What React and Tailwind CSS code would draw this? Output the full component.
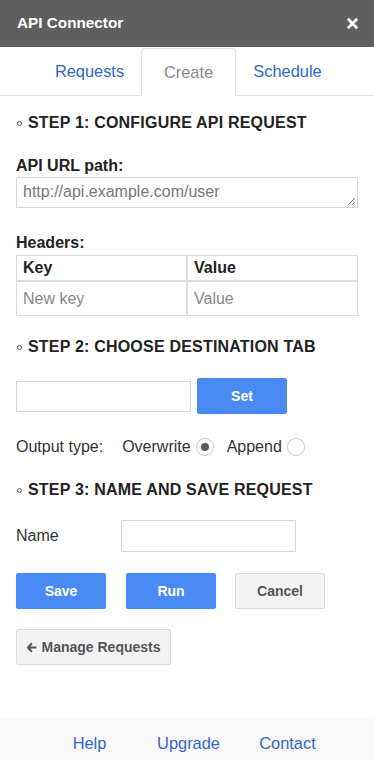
import { useState } from 'react'

function StepTitle({ children }) {
  return (
    <div className="flex items-center h-[20px] leading-[20px] text-[16px] font-bold text-[#222] tracking-[0.2px]">
      <span className="w-[5px] h-[5px] rounded-full border border-[#555] ml-[17px] mr-[6px] mt-[1px]" />
      <span>{children}</span>
    </div>
  )
}

function Radio({ checked }) {
  return (
    <span className="w-[18px] h-[18px] rounded-full border border-[#c8c8c8] flex items-center justify-center bg-white">
      {checked && <span className="w-[8px] h-[8px] rounded-full bg-[#5a5a5a]" />}
    </span>
  )
}

const blueBtn = 'w-[90px] h-[36px] rounded-[2px] bg-[#4a8af4] text-white font-bold text-[14px]'
const greyBtn = 'h-[36px] rounded-[2px] bg-[#f3f3f3] border border-[#dcdcdc] font-bold text-[14px]'

export default function App() {
  const [tab] = useState('Create')
  const tabs = ['Requests', 'Create', 'Schedule']

  return (
    <div className="w-[374px] h-[761px] flex flex-col bg-white text-[#222]" style={{ fontFamily: '"Liberation Sans", Arial, sans-serif' }}>
      <div className="h-[47px] bg-[#5f5f5f] flex items-center justify-between pl-[17px] pr-[15px] shrink-0">
        <span className="text-white font-bold text-[15.3px]">API Connector</span>
        <svg width="13" height="13" viewBox="0 0 13 13">
          <path d="M1.8 1.8 L11.2 11.2 M11.2 1.8 L1.8 11.2" stroke="white" strokeWidth="2.8" />
        </svg>
      </div>

      <div className="flex pl-[38px] border-b border-[#e3e3e3] h-[49px] pt-[1px] shrink-0">
        {tabs.map((t) => (
          <div
            key={t}
            className={
              t === tab
                ? 'w-[95px] -mb-px bg-white border border-[#e3e3e3] border-b-white rounded-t-[4px] flex items-center justify-center text-[16.4px] text-[#8a8a8a]'
                : 'w-[103px] flex items-center justify-center text-[16.4px] text-[#3366c8]'
            }
          >
            {t}
          </div>
        ))}
      </div>

      <div className="flex-1 pt-[17px] text-[16px] leading-[20px]">
        <StepTitle>STEP 1: CONFIGURE API REQUEST</StepTitle>

        <div className="px-[16px]">
          <div className="mt-[23px] font-bold">API URL path:</div>
          <div className="mt-[1px] relative h-[31px] border border-[#d6d6d6] px-[6px] pt-[4px] text-[#777]">
            http://api.example.com/user
            <svg className="absolute right-[1px] bottom-[1px]" width="9" height="9" viewBox="0 0 9 9">
              <path d="M8 1 L1 8 M8 5 L5 8" stroke="#777" strokeWidth="1" />
            </svg>
          </div>

          <div className="mt-[25px] font-bold">Headers:</div>
          <div className="mt-[2px] border border-[#dcdcdc] grid grid-cols-[171px_1fr]">
            <div className="h-[26px] border-r-2 border-b-2 border-[#dcdcdc] px-[6px] flex items-center font-bold">Key</div>
            <div className="h-[26px] border-b-2 border-[#dcdcdc] px-[6px] flex items-center font-bold">Value</div>
            <div className="h-[33px] border-r-2 border-[#dcdcdc] px-[6px] flex items-center text-[#888]">New key</div>
            <div className="h-[33px] px-[6px] flex items-center text-[#888]">Value</div>
          </div>
        </div>

        <div className="mt-[21px]">
          <StepTitle>STEP 2: CHOOSE DESTINATION TAB</StepTitle>
        </div>

        <div className="px-[16px]">
          <div className="mt-[21px] flex items-center gap-[6px]">
            <div className="w-[175px] h-[31px] border border-[#d6d6d6]" />
            <button className={blueBtn}>Set</button>
          </div>

          <div className="mt-[23px] flex items-center text-[#333]">
            <span>Output type:</span>
            <span className="ml-[19px]">Overwrite</span>
            <span className="ml-[5px]"><Radio checked /></span>
            <span className="ml-[13px]">Append</span>
            <span className="ml-[5px]"><Radio /></span>
          </div>
        </div>

        <div className="mt-[23px]">
          <StepTitle>STEP 3: NAME AND SAVE REQUEST</StepTitle>
        </div>

        <div className="px-[16px]">
          <div className="mt-[20px] flex items-center text-[#333]">
            <span className="w-[105px]">Name</span>
            <div className="w-[175px] h-[32px] border border-[#d6d6d6]" />
          </div>

          <div className="mt-[21px] flex items-center">
            <button className={blueBtn}>Save</button>
            <button className={'ml-[20px] ' + blueBtn}>Run</button>
            <button className={'ml-[19px] w-[90px] text-[#555] ' + greyBtn}>Cancel</button>
          </div>

          <button className={'mt-[20px] w-[155px] text-[#555] flex items-center justify-center gap-[4px] ' + greyBtn}>
            <svg width="11" height="11" viewBox="0 0 11 11">
              <path d="M5.2 0.6 L0.6 5.5 L5.2 10.4 L6.6 9 L4.3 6.6 H10.5 V4.4 H4.3 L6.6 2 Z" fill="#555" />
            </svg>
            Manage Requests
          </button>
        </div>
      </div>

      <div className="h-[43px] bg-[#f8f8f8] flex pl-[38px] pt-[15px] leading-[20px] shrink-0 text-[16.4px] text-[#3366c8]">
        <span className="w-[103px] text-center">Help</span>
        <span className="w-[95px] text-center">Upgrade</span>
        <span className="w-[103px] text-center">Contact</span>
      </div>
    </div>
  )
}
